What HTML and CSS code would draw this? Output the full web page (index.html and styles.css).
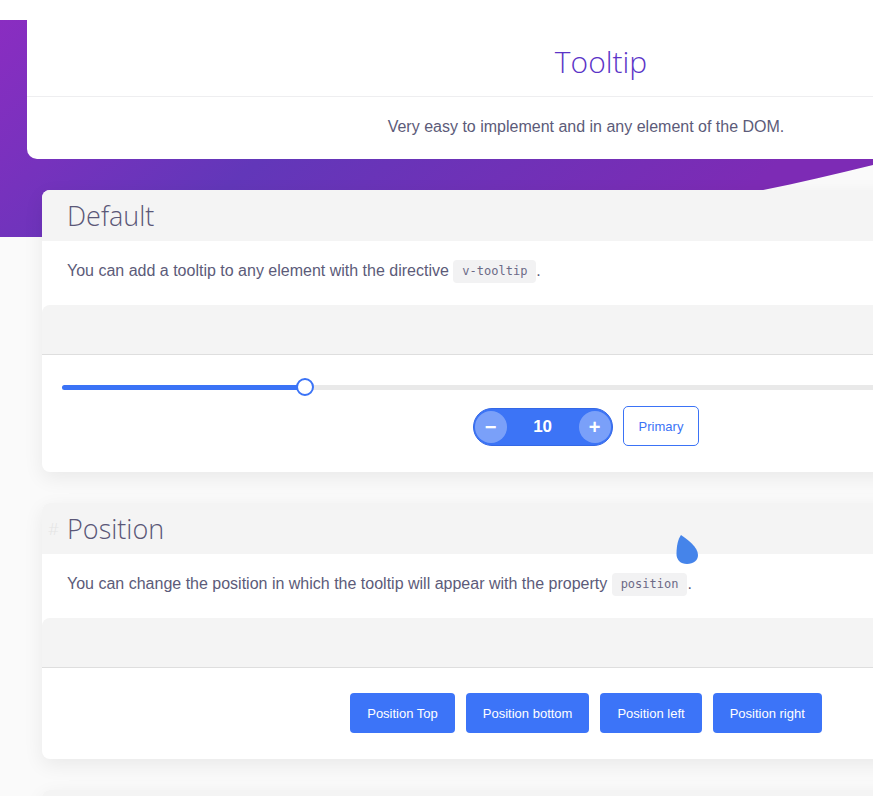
FILE: index.html
```html
<!DOCTYPE html>
<html>

<head>
  <link rel="stylesheet" href="styles.css">
</head>

<body>
  <div class="wave">
    <svg width="873" height="217" viewBox="0 0 873 217" preserveAspectRatio="none">
      <defs>
        <linearGradient id="waveFill" x1="0" y1="0" x2="1" y2="0.3">
          <stop offset="0" stop-color="#8a2dc1" />
          <stop offset="0.45" stop-color="#6237b9" />
          <stop offset="1" stop-color="#7d2bb5" />
        </linearGradient>
      </defs>
      <path d="M0 0 H873 V145 C740 178 620 200 420 212 C260 220 120 218 0 217 Z" fill="url(#waveFill)" />
    </svg>
  </div>
  <div class="ring"></div>

  <div class="page">
    <header class="intro">
      <div class="intro-head">
        <h1>Tooltip</h1>
      </div>
      <p class="intro-text">Very easy to implement and in any element of the DOM.</p>
    </header>

    <section class="card">
      <div class="card-head">
        <h2>Default</h2>
      </div>
      <p class="card-text">You can add a tooltip to any element with the directive <code>v-tooltip</code>.</p>
      <div class="demo">
        <div class="demo-bar"></div>
        <div class="demo-body">
          <div class="slider">
            <div class="slider-fill" style="width: 243px"></div>
            <div class="slider-thumb" style="left: 234px"></div>
          </div>
          <div class="demo-row">
            <div class="counter">
              <span class="counter-btn">&minus;</span>
              <span class="counter-value">10</span>
              <span class="counter-btn">+</span>
            </div>
            <button class="btn-outline">Primary</button>
          </div>
        </div>
      </div>
    </section>

    <section class="card">
      <div class="card-head">
        <h2><span class="anchor">#</span>Position</h2>
      </div>
      <p class="card-text">You can change the position in which the tooltip will appear with the property <code>position</code>.</p>
      <div class="demo">
        <div class="demo-bar"></div>
        <div class="demo-body demo-body-wide">
          <div class="demo-row">
            <button class="btn">Position Top</button>
            <button class="btn">Position bottom</button>
            <button class="btn">Position left</button>
            <button class="btn">Position right</button>
          </div>
        </div>
      </div>
    </section>

    <section class="card">
      <div class="card-head"></div>
    </section>
  </div>

  <svg class="drop" width="22" height="29" viewBox="0 0 22 29">
    <path d="M5 0 C11 4 22 12 22 20 C22 25.5 17.5 29 11 29 C4.5 29 0.5 25 0.5 19 C0.5 11 2 4 5 0 Z" fill="#4584ea" />
  </svg>
</body>

</html>
```

FILE: styles.css
```css
body {
  margin: 0;
  overflow: hidden;
  background: linear-gradient(#fff 0, #fff 20px, #fafafa 20px);
  font-family: 'Liberation Sans', Arial, sans-serif;
  color: #5c5b79;
}

.wave {
  position: absolute;
  top: 20px;
  left: 0;
  width: 873px;
  height: 217px;
}

.wave svg {
  display: block;
}

.ring {
  position: absolute;
  top: -16px;
  left: 861px;
  width: 24px;
  height: 24px;
  border: 1px solid #d6d6d6;
  border-radius: 50%;
}

.page {
  position: relative;
  width: 1172px;
  padding-bottom: 40px;
}

.intro {
  margin-left: 27px;
  width: 1118px;
  background: #fff;
  border-radius: 0 0 10px 10px;
}

.intro-head {
  padding: 40px 0 12px 30px;
  border-bottom: 1px solid #eeeef0;
  text-align: center;
}

.intro-head h1 {
  margin: 0;
  font-family: 'Open Sans', sans-serif;
  font-weight: 300;
  font-size: 30px;
  line-height: 44px;
  color: #5b34c7;
}

.intro-text {
  margin: 0;
  padding: 19px 0 21px;
  text-align: center;
  font-size: 16px;
  line-height: 22px;
}

.card {
  margin: 31px 0 0 42px;
  width: 1088px;
  background: #fff;
  border-radius: 8px;
  overflow: hidden;
  box-shadow: 0 6px 20px rgba(0, 0, 0, 0.07);
}

.card-head {
  height: 51px;
  padding: 0 25px;
  background: #f4f4f4;
}

.card-head h2 {
  margin: 0;
  font-family: 'Open Sans', sans-serif;
  font-weight: 300;
  font-size: 27px;
  line-height: 52px;
  color: #5a5777;
}

.anchor {
  display: inline-block;
  width: 19px;
  margin-left: -19px;
  font-size: 17px;
  color: #e4e4e4;
  vertical-align: top;
}

.card-text {
  margin: 0;
  padding: 18px 25px 22px;
  font-size: 16px;
  line-height: 24px;
}

.card-text code {
  display: inline-block;
  padding: 0 9px;
  background: #f2f2f3;
  border-radius: 4px;
  font-family: 'DejaVu Sans Mono', monospace;
  font-size: 12px;
  line-height: 23px;
  color: #6c6a86;
  vertical-align: 1px;
}

.demo-bar {
  height: 49px;
  background: #f4f4f4;
  border-radius: 8px 8px 0 0;
  border-bottom: 1px solid #dedede;
}

.demo-body {
  padding: 24px 20px 26px;
}

.demo-body-wide {
  padding: 25px 20px 26px;
}

.slider {
  position: relative;
  height: 16px;
  margin-bottom: 11px;
}

.slider::before {
  content: "";
  display: block;
  position: absolute;
  top: 6px;
  left: 0;
  right: 0;
  height: 5px;
  border-radius: 3px;
  background: #e9e9e9;
}

.slider-fill {
  position: relative;
  top: 6px;
  height: 5px;
  border-radius: 3px;
  background: #3b73f6;
}

.slider-thumb {
  position: absolute;
  top: -1px;
  width: 14px;
  height: 14px;
  border: 2px solid #3b73f6;
  border-radius: 50%;
  background: #fff;
}

.demo-row {
  display: flex;
  align-items: center;
  justify-content: center;
  gap: 10px;
}

.counter {
  display: flex;
  align-items: center;
  justify-content: space-between;
  box-sizing: border-box;
  width: 140px;
  height: 38px;
  margin-top: 2px;
  padding: 0 1px;
  background: #3c74f6;
  border: 1px solid #3468e6;
  border-radius: 19px;
}

.counter-btn {
  display: flex;
  align-items: center;
  justify-content: center;
  width: 32px;
  height: 32px;
  border-radius: 50%;
  background: rgba(255, 255, 255, 0.32);
  color: #fff;
  font-size: 20px;
  font-weight: bold;
}

.counter-value {
  color: #fff;
  font-size: 17px;
  font-weight: bold;
}

.btn-outline {
  height: 40px;
  padding: 0 15px;
  background: #fff;
  border: 1px solid #3b73f6;
  border-radius: 5px;
  color: #3b73f6;
  font-family: 'Liberation Sans', Arial, sans-serif;
  font-size: 13px;
}

.btn {
  height: 40px;
  padding: 0 17px;
  background: #3c74f8;
  border: none;
  border-radius: 4px;
  color: #fff;
  font-family: 'Liberation Sans', Arial, sans-serif;
  font-size: 13px;
}

.demo-row .btn + .btn {
  margin-left: 1px;
}

.drop {
  position: absolute;
  top: 535px;
  left: 676px;
}
```
